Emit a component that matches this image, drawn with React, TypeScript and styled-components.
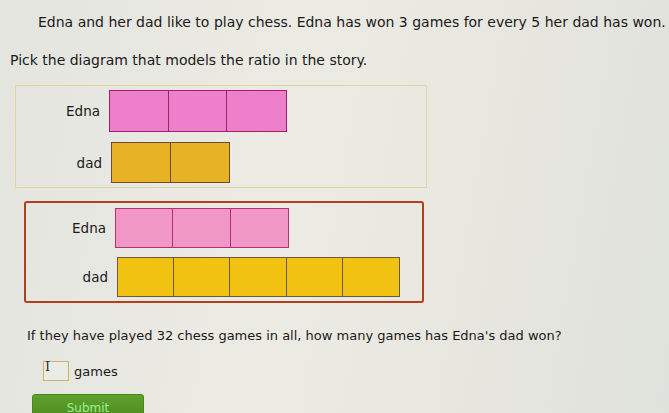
import React from "react";
import styled, { createGlobalStyle } from "styled-components";

const Global = createGlobalStyle`
  html, body {
    margin: 0;
    padding: 0;
    background: #e7e7df;
  }
  body {
    font-family: "DejaVu Sans", "Liberation Sans", sans-serif;
    color: #1a1a1a;
    width: 669px;
    height: 413px;
    overflow: hidden;
    background: linear-gradient(100deg, #e4e5e0 0%, #ecebe3 45%, #e6e6df 75%, #dfe1dc 100%);
  }
`;

const Page = styled.div`
  display: flex;
  flex-direction: column;
  width: 669px;
  height: 413px;
  overflow: hidden;
  & > * {
    flex-shrink: 0;
  }
`;

const Story = styled.p<{ $indent: number; $top: number; $size?: number }>`
  margin: ${p => p.$top}px 0 0 ${p => p.$indent}px;
  font-size: ${p => p.$size ?? 14}px;
  line-height: 16px;
  white-space: nowrap;
`;

const Choice = styled.div<{ $selected?: boolean; $left: number; $top: number; $width: number; $height: number }>`
  box-sizing: border-box;
  margin: ${p => p.$top}px 0 0 ${p => p.$left}px;
  width: ${p => p.$width}px;
  height: ${p => p.$height}px;
  border: ${p => (p.$selected ? "2px solid #b2401e" : "1px solid #e2d49a")};
  border-radius: ${p => (p.$selected ? "3px" : "1px")};
  padding-top: ${p => (p.$selected ? 5 : 4)}px;
  display: flex;
  flex-direction: column;
  gap: ${p => (p.$selected ? 9 : 10)}px;
`;

const Row = styled.div`
  display: flex;
  align-items: center;
`;

const Label = styled.span<{ $width: number }>`
  width: ${p => p.$width}px;
  text-align: right;
  font-size: 13.5px;
  flex-shrink: 0;
`;

const Bar = styled.div<{ $fill: string; $line: string; $offset: number; $height: number }>`
  display: flex;
  margin-left: ${p => p.$offset}px;
  height: ${p => p.$height}px;
  border: 1px solid ${p => p.$line};
  background: ${p => p.$fill};
  box-sizing: border-box;
`;

const Cell = styled.div<{ $width: number; $line: string }>`
  width: ${p => p.$width}px;
  height: 100%;
  box-sizing: border-box;
  border-right: 1px solid ${p => p.$line};
  &:last-child {
    border-right: none;
  }
`;

const AnswerRow = styled.div`
  display: flex;
  align-items: center;
  gap: 5px;
  margin: 17px 0 0 43px;
  font-size: 13px;
`;

const AnswerBox = styled.div`
  width: 26px;
  height: 20px;
  box-sizing: border-box;
  border: 1px solid #c9b46a;
  background: #ecece6;
  position: relative;
`;

const Caret = styled.span`
  position: absolute;
  left: 1px;
  top: -3px;
  font-family: "DejaVu Serif", serif;
  font-size: 13px;
  color: #333;
`;

const SubmitButton = styled.button`
  margin: 13px 0 0 32px;
  width: 112px;
  height: 24px;
  box-sizing: border-box;
  border: 1px solid #3f8a1c;
  border-radius: 3px;
  background: linear-gradient(#5fa12c, #4e8d1f);
  color: #95f29a;
  font-family: "DejaVu Sans", sans-serif;
  font-size: 12px;
  padding: 3px 0 0;
  text-align: center;
  align-self: flex-start;
  line-height: 14px;
`;

type BarSpec = { count: number; cell: number; fill: string; line: string; offset: number; height: number };

const DiagramRow = ({ label, labelWidth, bar }: { label: string; labelWidth: number; bar: BarSpec }) => (
  <Row>
    <Label $width={labelWidth}>{label}</Label>
    <Bar $fill={bar.fill} $line={bar.line} $offset={bar.offset} $height={bar.height}>
      {Array.from({ length: bar.count }).map((_, i) => (
        <Cell key={i} $width={bar.cell} $line={bar.line} />
      ))}
    </Bar>
  </Row>
);

export default function App() {
  return (
    <>
      <Global />
      <Page>
        <Story $indent={38} $top={14}>
          Edna and her dad like to play chess. Edna has won 3 games for every 5 her dad has won.
        </Story>
        <Story $indent={10} $top={22}>
          Pick the diagram that models the ratio in the story.
        </Story>

        <Choice $left={15} $top={17} $width={412} $height={103}>
          <DiagramRow
            label="Edna"
            labelWidth={84}
            bar={{ count: 3, cell: 58.6, fill: "#ee7fcb", line: "#a0206e", offset: 9, height: 42 }}
          />
          <DiagramRow
            label="dad"
            labelWidth={86}
            bar={{ count: 2, cell: 58.5, fill: "#e7b325", line: "#6e4a36", offset: 9, height: 41 }}
          />
        </Choice>

        <Choice $selected $left={24} $top={13} $width={400} $height={102}>
          <DiagramRow
            label="Edna"
            labelWidth={80}
            bar={{ count: 3, cell: 57.3, fill: "#f197c6", line: "#b0307a", offset: 9, height: 40 }}
          />
          <DiagramRow
            label="dad"
            labelWidth={82}
            bar={{ count: 5, cell: 56.2, fill: "#f1c212", line: "#6a5a40", offset: 9, height: 40 }}
          />
        </Choice>

        <Story $indent={27} $top={25} $size={13}>
          If they have played 32 chess games in all, how many games has Edna's dad won?
        </Story>
        <AnswerRow>
          <AnswerBox>
            <Caret>I</Caret>
          </AnswerBox>
          games
        </AnswerRow>
        <SubmitButton>Submit</SubmitButton>
      </Page>
    </>
  );
}
